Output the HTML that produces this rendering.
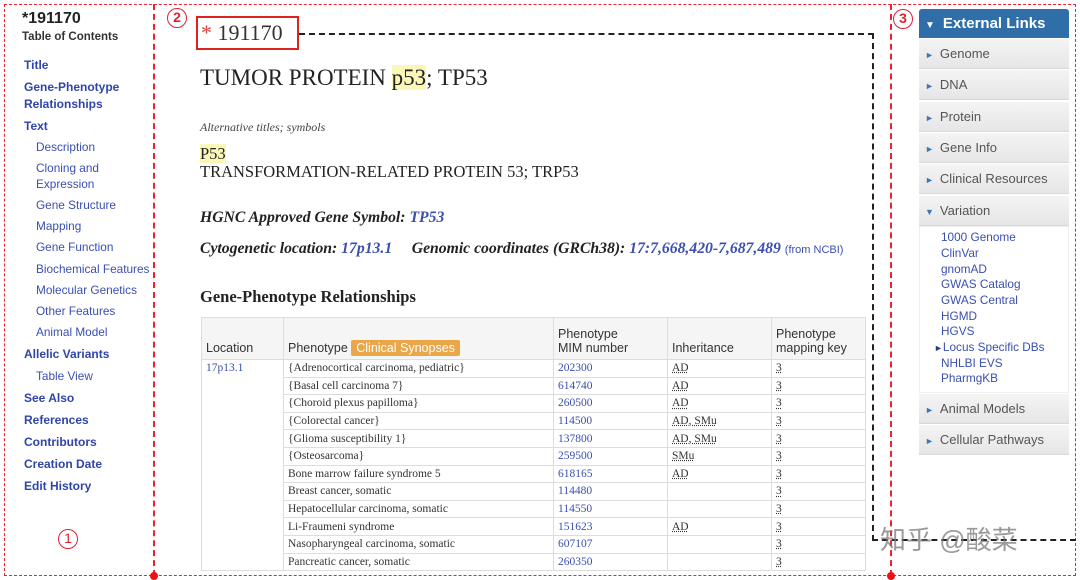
<!DOCTYPE html>
<html><head><meta charset="utf-8"><style>
*{margin:0;padding:0;box-sizing:border-box}
body{width:1080px;height:579px;background:#fff;position:relative;overflow:hidden;font-family:"Liberation Sans",sans-serif}
.a{position:absolute;white-space:nowrap}
.s{font-family:"Liberation Serif",serif}
.toc{color:#3a4fb0;font-size:11.8px}
.tb{font-weight:bold;font-size:12px;color:#2f45a8}
.circ{position:absolute;width:20px;height:20px;border:1.5px solid #d23;border-radius:50%;color:#d23;font-size:14px;text-align:center;line-height:17px;font-weight:bold}
table{border-collapse:collapse;font-family:"Liberation Serif",serif;font-size:11.5px;color:#333}
td,th{border:1px solid #ddd;padding:0 4px;height:17.6px;text-align:left;vertical-align:middle}
th{font-family:"Liberation Sans",sans-serif;font-size:12.5px;font-weight:normal;color:#333;background:#f5f5f5;vertical-align:bottom;padding-bottom:4px}
td.l{color:#3a4fb0}
.u{text-decoration:underline dotted}
.side{position:absolute;left:919px;width:150px;height:30px;background:linear-gradient(#f4f4f4,#e6e6e6);border-bottom:1px solid #d8d8d8;color:#555;font-size:13px;padding-left:6px;line-height:30px}
.side b{color:#3b78b5;font-size:9px;margin-right:6px;font-weight:normal}
.vl{color:#3a4fb0;font-size:11.8px;position:absolute;left:941px}
</style></head><body>
<div class="a" style="left:4px;top:4px;width:1072px;height:572px;border:1px dashed #e23"></div>
<div class="a" style="left:153px;top:4px;height:572px;border-left:2px dashed #e23"></div>
<div class="a" style="left:890px;top:4px;height:572px;border-left:2px dashed #e23"></div>
<div class="a" style="left:150px;top:572px;width:8px;height:8px;border-radius:50%;background:#e11"></div>
<div class="a" style="left:887px;top:572px;width:8px;height:8px;border-radius:50%;background:#e11"></div>

<div class="a" style="left:22px;top:10px;font-size:16px;font-weight:bold;color:#222">*191170</div>
<div class="a" style="left:22px;top:31px;font-size:11.5px;font-weight:bold;color:#333">Table of Contents</div>
<div class="a tb" style="left:24px;top:58px">Title</div>
<div class="a tb" style="left:24px;top:80px">Gene-Phenotype</div>
<div class="a tb" style="left:24px;top:97px">Relationships</div>
<div class="a tb" style="left:24px;top:119px">Text</div>
<div class="a toc" style="left:36px;top:140px">Description</div>
<div class="a toc" style="left:36px;top:161px">Cloning and</div>
<div class="a toc" style="left:36px;top:177px">Expression</div>
<div class="a toc" style="left:36px;top:198px">Gene Structure</div>
<div class="a toc" style="left:36px;top:219px">Mapping</div>
<div class="a toc" style="left:36px;top:240px">Gene Function</div>
<div class="a toc" style="left:36px;top:262px">Biochemical Features</div>
<div class="a toc" style="left:36px;top:283px">Molecular Genetics</div>
<div class="a toc" style="left:36px;top:304px">Other Features</div>
<div class="a toc" style="left:36px;top:325px">Animal Model</div>
<div class="a tb" style="left:24px;top:347px">Allelic Variants</div>
<div class="a toc" style="left:36px;top:369px">Table View</div>
<div class="a tb" style="left:24px;top:391px">See Also</div>
<div class="a tb" style="left:24px;top:413px">References</div>
<div class="a tb" style="left:24px;top:435px">Contributors</div>
<div class="a tb" style="left:24px;top:457px">Creation Date</div>
<div class="a tb" style="left:24px;top:479px">Edit History</div>
<div class="circ" style="left:58px;top:529px;font-weight:normal">1</div>

<div class="circ" style="left:167px;top:8px">2</div>
<div class="a" style="left:196px;top:16px;width:103px;height:34px;border:2px solid #d22"></div>
<div class="a s" style="left:201px;top:20px;font-size:22px;color:#333"><span style="color:#d44">*</span> 191170</div>
<div class="a" style="left:299px;top:33px;width:575px;border-top:2px dashed #222"></div>
<div class="a" style="left:872px;top:33px;height:508px;border-left:2px dashed #222"></div>
<div class="a" style="left:872px;top:539px;width:204px;border-top:2px dashed #222"></div>
<div class="a s" style="left:200px;top:65px;font-size:23px;color:#222">TUMOR PROTEIN <span style="background:#fbf7b6">p53</span>; TP53</div>
<div class="a s" style="left:200px;top:120px;font-size:12px;font-style:italic;color:#444">Alternative titles; symbols</div>
<div class="a s" style="left:200px;top:144px;font-size:16.5px;color:#222"><span style="background:#fbf7b6">P53</span></div>
<div class="a s" style="left:200px;top:162px;font-size:16.5px;color:#222">TRANSFORMATION-RELATED PROTEIN 53; TRP53</div>
<div class="a s" style="left:200px;top:209px;font-size:15.7px;font-style:italic;font-weight:bold;color:#222">HGNC Approved Gene Symbol: <span style="color:#3a4fb0">TP53</span></div>
<div class="a s" style="left:200px;top:240px;font-size:15.7px;font-style:italic;font-weight:bold;color:#222">Cytogenetic location: <span style="color:#3a4fb0">17p13.1</span>&nbsp;&nbsp;&nbsp;&nbsp; Genomic coordinates (GRCh38): <span style="color:#3a4fb0">17:7,668,420-7,687,489</span> <span style="font-family:'Liberation Sans',sans-serif;font-style:normal;font-weight:normal;font-size:11px;color:#3a4fb0">(from NCBI)</span></div>
<div class="a s" style="left:200px;top:287px;font-size:16.5px;font-weight:bold;color:#222">Gene-Phenotype Relationships</div>
<table class="a" style="left:201px;top:317px;width:665px">
<tr style="height:42px"><th style="width:82px">Location</th><th style="width:270px">Phenotype <span style="background:#eaa649;color:#fff;padding:1px 5px;border-radius:2px">Clinical Synopses</span></th><th style="width:114px">Phenotype<br>MIM number</th><th style="width:104px">Inheritance</th><th>Phenotype<br>mapping key</th></tr>
<tr><td class="l" rowspan="12" style="vertical-align:top;padding-top:2px">17p13.1</td><td>{Adrenocortical carcinoma, pediatric}</td><td class="l">202300</td><td class="u">AD</td><td class="u">3</td></tr>
<tr><td>{Basal cell carcinoma 7}</td><td class="l">614740</td><td class="u">AD</td><td class="u">3</td></tr>
<tr><td>{Choroid plexus papilloma}</td><td class="l">260500</td><td class="u">AD</td><td class="u">3</td></tr>
<tr><td>{Colorectal cancer}</td><td class="l">114500</td><td class="u">AD, SMu</td><td class="u">3</td></tr>
<tr><td>{Glioma susceptibility 1}</td><td class="l">137800</td><td class="u">AD, SMu</td><td class="u">3</td></tr>
<tr><td>{Osteosarcoma}</td><td class="l">259500</td><td class="u">SMu</td><td class="u">3</td></tr>
<tr><td>Bone marrow failure syndrome 5</td><td class="l">618165</td><td class="u">AD</td><td class="u">3</td></tr>
<tr><td>Breast cancer, somatic</td><td class="l">114480</td><td></td><td class="u">3</td></tr>
<tr><td>Hepatocellular carcinoma, somatic</td><td class="l">114550</td><td></td><td class="u">3</td></tr>
<tr><td>Li-Fraumeni syndrome</td><td class="l">151623</td><td class="u">AD</td><td class="u">3</td></tr>
<tr><td>Nasopharyngeal carcinoma, somatic</td><td class="l">607107</td><td></td><td class="u">3</td></tr>
<tr><td>Pancreatic cancer, somatic</td><td class="l">260350</td><td></td><td class="u">3</td></tr>
</table>

<div class="circ" style="left:893px;top:9px">3</div>
<div class="a" style="left:919px;top:9px;width:150px;height:29px;background:#2f6ea8;border-radius:3px 3px 0 0;color:#fff;font-size:15px;font-weight:bold;line-height:29px;padding-left:6px"><span style="font-size:10px;margin-right:8px">▼</span>External Links</div>
<div class="side" style="top:39px"><b>►</b>Genome</div>
<div class="side" style="top:70px"><b>►</b>DNA</div>
<div class="side" style="top:102px"><b>►</b>Protein</div>
<div class="side" style="top:133px"><b>►</b>Gene Info</div>
<div class="side" style="top:164px"><b>►</b>Clinical Resources</div>
<div class="side" style="top:196px"><b>▼</b>Variation</div>
<div class="a" style="left:919px;top:226px;width:150px;height:167px;background:#fff;border:1px solid #eee"></div>
<div class="vl" style="top:230px">1000 Genome</div>
<div class="vl" style="top:246px">ClinVar</div>
<div class="vl" style="top:262px">gnomAD</div>
<div class="vl" style="top:277px">GWAS Catalog</div>
<div class="vl" style="top:293px">GWAS Central</div>
<div class="vl" style="top:309px">HGMD</div>
<div class="vl" style="top:324px">HGVS</div>
<div class="vl" style="top:340px;left:934px"><span style="color:#223a9a;font-size:9px">►</span>Locus Specific DBs</div>
<div class="vl" style="top:356px">NHLBI EVS</div>
<div class="vl" style="top:371px">PharmgKB</div>
<div class="side" style="top:394px"><b>►</b>Animal Models</div>
<div class="side" style="top:425px"><b>►</b>Cellular Pathways</div>

<div class="a" style="left:880px;top:520px;font-size:26px;color:rgba(120,120,120,0.75);font-family:'Liberation Sans','Noto Sans CJK SC',sans-serif">知乎 @酸菜</div>
</body></html>
